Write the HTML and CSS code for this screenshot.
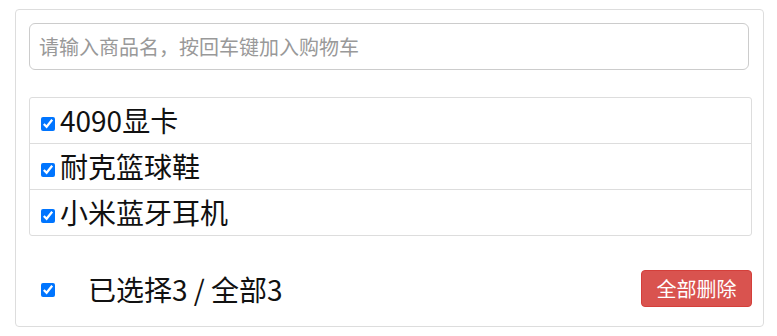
FILE: index.html
```html
<!DOCTYPE html>
<html lang="zh-CN">
<head>
<meta charset="utf-8">
<title>购物车</title>
<link rel="stylesheet" href="styles.css">
</head>
<body>
<div class="panel">
  <input class="new-item" type="text" placeholder="请输入商品名，按回车键加入购物车">
  <ul class="item-list">
    <li class="item"><label class="item-label"><input type="checkbox" checked>4090显卡</label></li>
    <li class="item"><label class="item-label"><input type="checkbox" checked>耐克篮球鞋</label></li>
    <li class="item"><label class="item-label"><input type="checkbox" checked>小米蓝牙耳机</label></li>
  </ul>
  <div class="footer">
    <input class="check-all" type="checkbox" checked>
    <span class="summary">已选择3 / 全部3</span>
    <button class="btn-danger" type="button">全部删除</button>
  </div>
</div>
</body>
</html>
```

FILE: styles.css
```css
* { box-sizing: border-box; }
body {
  margin: 8px;
  background: #fff;
  font-family: "Noto Sans CJK SC", "Noto Sans", sans-serif;
  color: #111;
}
.panel {
  margin: 1px 0 0 7px;
  width: 749px;
  height: 318px;
  border: 1px solid #ddd;
  border-radius: 4px;
  padding: 13px 15px 0 13px;
}
.new-item {
  display: block;
  width: 720px;
  height: 47px;
  margin: 0;
  padding: 0 9px;
  border: 1px solid #ccc;
  border-radius: 6px;
  font-family: inherit;
  font-size: 20px;
  color: #555;
  outline: none;
}
.new-item::placeholder { color: #999; }
.item-list {
  list-style: none;
  margin: 27px 0 0 0;
  padding: 0;
  width: 723px;
  border: 1px solid #ddd;
  border-radius: 3px;
}
.item {
  height: 46px;
  border-bottom: 1px solid #ddd;
  padding-left: 7px;
  font-size: 28px;
}
.item:last-child { border-bottom: none; height: 45px; }
.item-label {
  display: flex;
  align-items: center;
  height: 45px;
  line-height: 1.35;
}
.item-label input {
  width: 14px;
  height: 14px;
  margin: 6px 5px 0 4px;
}
.footer {
  display: flex;
  align-items: center;
  width: 723px;
  height: 37px;
  margin-top: 34px;
  padding-left: 8px;
}
.check-all {
  width: 14px;
  height: 14px;
  margin: 5px 3px 3px 4px;
}
.summary {
  margin-left: 30px;
  font-size: 28px;
  flex: 1;
}
.btn-danger {
  width: 111px;
  height: 37px;
  padding: 0;
  background: #d9534f;
  border: 1px solid #d43f3a;
  border-radius: 4px;
  color: #fff;
  font-family: inherit;
  font-size: 20px;
}
```
